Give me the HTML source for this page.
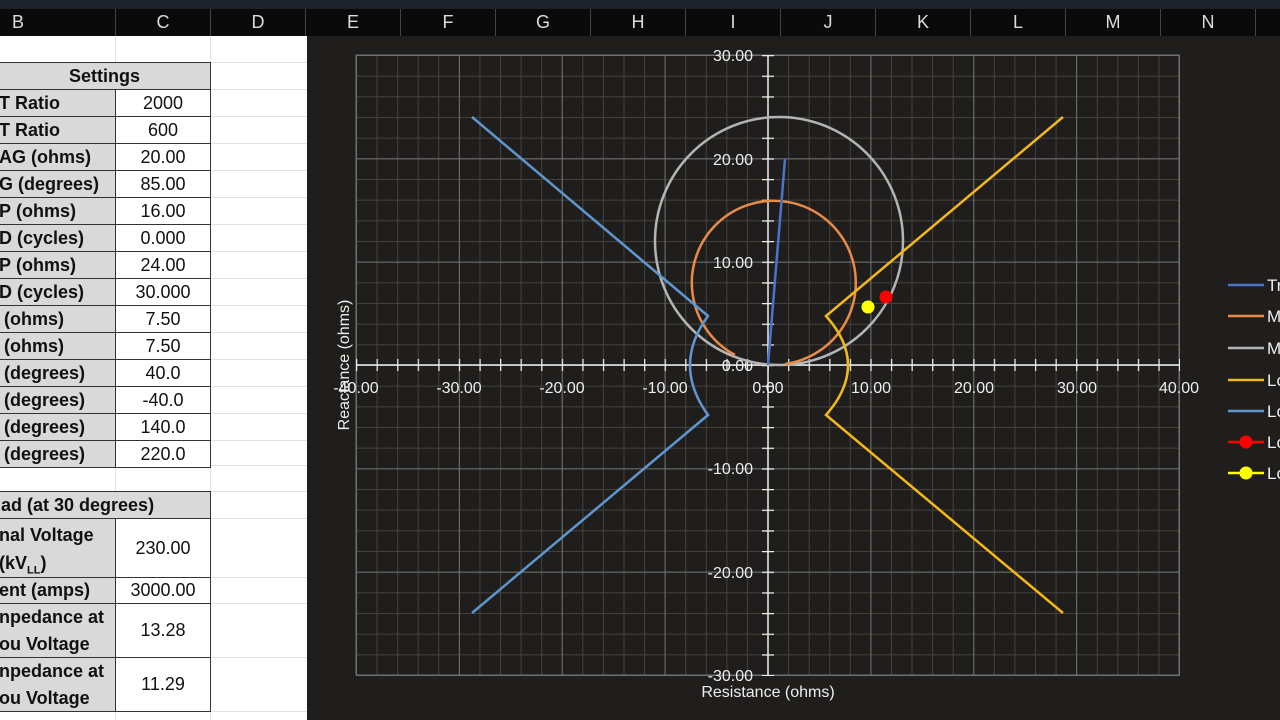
<!DOCTYPE html>
<html><head><meta charset="utf-8"><style>
*{margin:0;padding:0;box-sizing:border-box}
body{width:1280px;height:720px;overflow:hidden;background:#fff;position:relative;font-family:"Liberation Sans",sans-serif}
.top{position:absolute;left:0;top:0;width:1280px;height:9px;background:#1c222a}
.hdr{position:absolute;left:0;top:9px;width:1280px;height:27px;background:#0a0a0a}
.hdr span{position:absolute;top:3px;color:#ddd;font-size:18px;transform:translateX(-50%)}
.hdr i{position:absolute;top:0;width:1px;height:27px;background:#444}
.cell{position:absolute;border:1px solid #333;font-size:18px;color:#111;display:flex;align-items:center;white-space:nowrap;overflow:hidden}
.g{background:#d9d9d9;font-weight:bold}
.w{background:#fff;justify-content:center}
.gl{position:absolute;background:#e2e2e2}
</style></head><body>
<div class="top"></div>
<div class="hdr">
<span style="left:18px">B</span><span style="left:163px">C</span><span style="left:258px">D</span><span style="left:353px">E</span><span style="left:448px">F</span><span style="left:543px">G</span><span style="left:638px">H</span><span style="left:733px">I</span><span style="left:828px">J</span><span style="left:923px">K</span><span style="left:1018px">L</span><span style="left:1113px">M</span><span style="left:1208px">N</span>
<i style="left:115px"></i><i style="left:210px"></i><i style="left:305px"></i><i style="left:400px"></i><i style="left:495px"></i><i style="left:590px"></i><i style="left:685px"></i><i style="left:780px"></i><i style="left:875px"></i><i style="left:970px"></i><i style="left:1065px"></i><i style="left:1160px"></i><i style="left:1255px"></i>
</div>
<div id="gls"></div>
<div class="gl" style="left:115px;top:36px;width:1px;height:684px"></div>
<div class="gl" style="left:210px;top:36px;width:1px;height:684px"></div>

<div class="cell g" style="left:-2px;top:62px;width:213px;height:28px;justify-content:center;padding-left:0">Settings</div>
<div id="t1"></div>
<script>
var ys=[62,89,116,143,170,197,224,251,278,305,332,359,386,413,440,465,491,518,577,603,657,711];
var g="";ys.forEach(function(y){g+='<div class="gl" style="left:0;top:'+y+'px;width:307px;height:1px"></div>';});
document.getElementById("gls").outerHTML=g;
var rows=[["T Ratio","2000"],["T Ratio","600"],["AG (ohms)","20.00"],["G (degrees)","85.00"],["P (ohms)","16.00"],["D (cycles)","0.000"],["P (ohms)","24.00"],["D (cycles)","30.000"],[" (ohms)","7.50"],[" (ohms)","7.50"],[" (degrees)","40.0"],[" (degrees)","-40.0"],[" (degrees)","140.0"],[" (degrees)","220.0"]];
var h="";
rows.forEach(function(r,i){var y=89+i*27;
h+='<div class="cell g" style="left:-2px;top:'+y+'px;width:118px;height:28px;padding-left:0">'+r[0].replace(/ /g,"&nbsp;")+'</div>';
h+='<div class="cell w" style="left:115px;top:'+y+'px;width:96px;height:28px">'+r[1]+'</div>';});
document.getElementById("t1").outerHTML=h;
</script>
<div class="cell g" style="left:-2px;top:491px;width:213px;height:28px;padding-left:2px">ad (at 30 degrees)</div>
<div class="cell g" style="left:-2px;top:518px;width:118px;height:60px;padding-left:0;line-height:28px;display:block;padding-top:2px">nal Voltage<br>(kV<sub style="font-size:11px">LL</sub>)</div>
<div class="cell w" style="left:115px;top:518px;width:96px;height:60px">230.00</div>
<div class="cell g" style="left:-2px;top:577px;width:118px;height:27px;padding-left:0">ent (amps)</div>
<div class="cell w" style="left:115px;top:577px;width:96px;height:27px">3000.00</div>
<div class="cell g" style="left:-2px;top:603px;width:118px;height:55px;padding-left:0;display:block;line-height:27px">npedance at<br>ou Voltage</div>
<div class="cell w" style="left:115px;top:603px;width:96px;height:55px">13.28</div>
<div class="cell g" style="left:-2px;top:657px;width:118px;height:55px;padding-left:0;display:block;line-height:27px">npedance at<br>ou Voltage</div>
<div class="cell w" style="left:115px;top:657px;width:96px;height:55px">11.29</div>

<svg style="position:absolute;left:307px;top:36px" width="973" height="684" viewBox="307 36 973 684" font-family="Liberation Sans, sans-serif">
<defs>
<pattern id="mn" x="356" y="55" width="20.575" height="20.667" patternUnits="userSpaceOnUse"><path d="M0.5 0V20.667M0 0.5H20.575" stroke="#44423f" stroke-width="1" fill="none"/></pattern>
<pattern id="mj" x="356" y="55" width="102.875" height="103.333" patternUnits="userSpaceOnUse"><path d="M0.5 0V103.333M0 0.5H102.875" stroke="#707070" stroke-width="1" fill="none"/></pattern>
<pattern id="tx" x="356" y="359" width="20.575" height="12" patternUnits="userSpaceOnUse"><path d="M0.5 0V12" stroke="#eee" stroke-width="1.5"/></pattern>
<pattern id="ty" x="762" y="55" width="12" height="20.667" patternUnits="userSpaceOnUse"><path d="M0 0.5H12" stroke="#eee" stroke-width="1.5"/></pattern>
</defs>
<rect x="307" y="36" width="973" height="684" fill="#201e1c"/>
<rect x="356" y="55" width="823" height="620" fill="url(#mn)"/>
<rect x="356" y="55" width="824" height="621" fill="url(#mj)"/>
<rect x="356" y="55" width="823" height="620" fill="none" stroke="#707070"/>
<rect x="356" y="359" width="824" height="12" fill="url(#tx)"/>
<rect x="762" y="55" width="12" height="621" fill="url(#ty)"/>
<path d="M356 365H1179M768 55V675" stroke="#eee" stroke-width="1.5"/>
<g fill="#eee" font-size="16" text-anchor="end">
<text x="753" y="61">30.00</text><text x="753" y="165">20.00</text><text x="753" y="268">10.00</text><text x="753" y="371">0.00</text><text x="753" y="474">-10.00</text><text x="753" y="578">-20.00</text><text x="753" y="681">-30.00</text>
</g>
<g fill="#eee" font-size="16" text-anchor="middle">
<text x="356" y="393">-40.00</text><text x="459" y="393">-30.00</text><text x="562" y="393">-20.00</text><text x="665" y="393">-10.00</text><text x="768" y="393">0.00</text><text x="871" y="393">10.00</text><text x="974" y="393">20.00</text><text x="1077" y="393">30.00</text><text x="1179" y="393">40.00</text>
<text x="768" y="697" font-size="16">Resistance (ohms)</text>
<text transform="translate(349,365) rotate(-90)" font-size="16">Reactance (ohms)</text>
</g>
<g fill="none" stroke-width="2.5">
<circle cx="779" cy="241" r="124" stroke="#b4b4b4"/>
<path d="M735 355A82 82 0 1 1 785 364" stroke="#e88a48"/>
<path d="M768 365L785 159" stroke="#4a74c8"/>
<path d="M472 117L708 316Q672 365 708 415L472 613" stroke="#5f96cf"/>
<path d="M1063 117L826 316Q870 365 826 415L1063 613" stroke="#f2b81c"/>
</g>
<circle cx="886" cy="297" r="6.5" fill="#f00"/>
<circle cx="868" cy="307" r="6.5" fill="#ff0"/>
<g stroke-width="2.5">
<path d="M1228 285H1264" stroke="#4a74c8"/><path d="M1228 316H1264" stroke="#e88a48"/><path d="M1228 348H1264" stroke="#b4b4b4"/><path d="M1228 380H1264" stroke="#f2b81c"/><path d="M1228 411H1264" stroke="#5f96cf"/><path d="M1228 442H1264" stroke="#f00"/><path d="M1228 473H1264" stroke="#ff0"/>
</g>
<circle cx="1246" cy="442" r="6.5" fill="#f00"/><circle cx="1246" cy="473" r="6.5" fill="#ff0"/>
<g fill="#eee" font-size="17"><text x="1267" y="291">Tr</text><text x="1267" y="322">M</text><text x="1267" y="354">M</text><text x="1267" y="386">Lo</text><text x="1267" y="417">Lo</text><text x="1267" y="448">Lo</text><text x="1267" y="479">Lo</text></g>
</svg>
</body></html>
